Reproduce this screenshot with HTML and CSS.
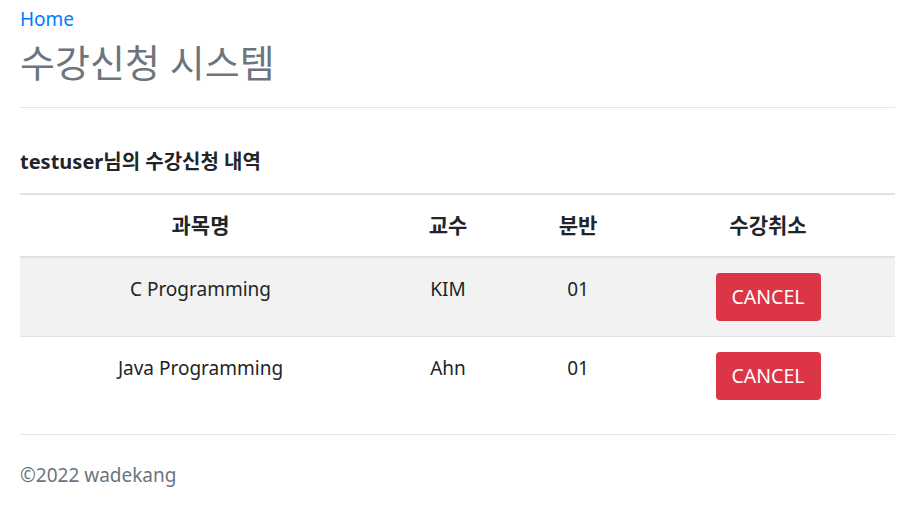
FILE: index.html
```html
<!DOCTYPE html>
<html lang="ko">
  <head>
    <meta charset="utf-8" />
    <title>수강신청 시스템</title>
    <link rel="stylesheet" href="styles.css">
  </head>

  <body>
    <div class="container">
      <header class="page-header">
        <a href="#" class="home-link">Home</a>
        <h1>수강신청 시스템</h1>
      </header>

      <h4 class="list-title">testuser님의 수강신청 내역</h4>

      <table class="table">
        <thead>
          <tr>
            <th class="col-name">과목명</th>
            <th class="col-prof">교수</th>
            <th class="col-class">분반</th>
            <th class="col-cancel">수강취소</th>
          </tr>
        </thead>
        <tbody>
          <tr class="striped">
            <td>C Programming</td>
            <td>KIM</td>
            <td>01</td>
            <td class="btn-cell"><button type="button" class="btn-cancel">CANCEL</button></td>
          </tr>
          <tr>
            <td>Java Programming</td>
            <td>Ahn</td>
            <td>01</td>
            <td class="btn-cell"><button type="button" class="btn-cancel">CANCEL</button></td>
          </tr>
        </tbody>
      </table>

      <footer class="page-footer">
        <p>&copy;2022 wadekang</p>
      </footer>
    </div>
  </body>
</html>
```

FILE: styles.css
```css
body {
  font-family: "Noto Sans", "Noto Sans CJK KR", sans-serif;
  font-size: 20px;
  color: #212529;
  margin: 0;
  background-color: #fff;
}
.container {
  padding: 0 16px 0 20px;
}
.page-header {
  border-bottom: 1px solid #e5e5e5;
  padding-top: 5px;
  padding-bottom: 16px;
}
.home-link {
  display: block;
  color: #007bff;
  text-decoration: none;
  font-size: 19px;
  line-height: 28px;
}
.page-header h1 {
  margin: 0;
  font-size: 38px;
  font-weight: 400;
  line-height: 58px;
  color: #6c757d;
}
.list-title {
  margin: 39px 0 16px;
  font-size: 20px;
  font-weight: 700;
  line-height: 30px;
}
.table {
  width: 100%;
  border-collapse: collapse;
  table-layout: fixed;
}
.table th,
.table td {
  box-sizing: border-box;
  text-align: center;
  vertical-align: top;
}
.table th {
  font-size: 21px;
  font-weight: 700;
  line-height: 27px;
  padding: 17px 12px;
  border-top: 2px solid #dee2e6;
  border-bottom: 2px solid #dee2e6;
}
.table td {
  font-size: 19px;
  line-height: 27px;
  padding: 18px 12px 33px;
  border-bottom: 1px solid #dee2e6;
}
.table tbody tr:last-child td {
  border-bottom: none;
}
.table td.btn-cell {
  padding: 15px 12px 15px;
}
.col-name { width: 361px; }
.col-prof { width: 134px; }
.col-class { width: 126px; }
.striped {
  background-color: #f2f2f2;
}
.btn-cancel {
  font-family: inherit;
  font-size: 19.5px;
  line-height: 28px;
  color: #fff;
  background-color: #dc3545;
  border: none;
  border-radius: 4px;
  width: 105px;
  height: 48px;
  padding: 0;
  cursor: pointer;
}
.page-footer {
  margin-top: 19px;
  border-top: 1px solid #e5e5e5;
  padding-top: 27px;
}
.page-footer p {
  margin: 0;
  color: #6c757d;
  font-size: 19px;
  line-height: 27px;
}
```
